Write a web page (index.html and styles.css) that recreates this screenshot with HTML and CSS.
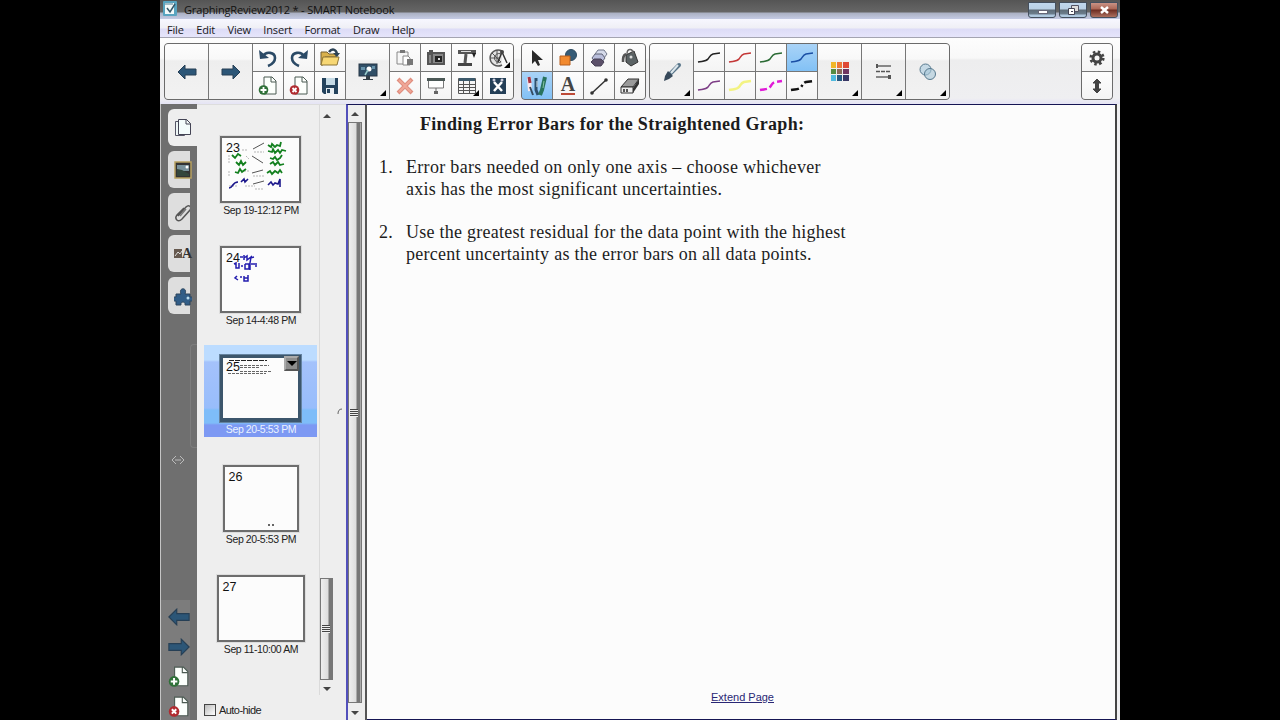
FILE: index.html
```html
<!DOCTYPE html>
<html lang="en">
<head>
    <meta charset="UTF-8">
    <title>GraphingReview2012 * - SMART Notebook</title>
    <link rel="stylesheet" href="styles.css">
</head>
<body>

    <!-- Shared icons -->
    <svg class="defs">
        <symbol id="arrow" viewBox="0 0 20 16"><path d="M1 8 8 1v4h11v6H8v4z" fill="#2c5677" stroke="#263f55" stroke-width="1"/></symbol>
        <symbol id="undo" viewBox="0 0 20 20"><path d="M5 8C8 3 17 4 17 10c0 4-2 6-7 8" fill="none" stroke="#2b4a66" stroke-width="2.600"/><path d="M1 2l1 9 9-1z" fill="#2b4a66"/></symbol>
        <symbol id="page-add" viewBox="0 0 20 20"><path d="M6 1h8l4 4v13H6z" fill="#fcfffc" stroke="#4b5a52"/><path d="M13 1v5h5" fill="none" stroke="#4b5a52"/><circle cx="5.5" cy="14" r="4.8" fill="#2f7038"/><path d="M5.500 11v6M2.500 14h6" stroke="#fff" stroke-width="1.800"/></symbol>
        <symbol id="page-del" viewBox="0 0 20 20"><path d="M6 1h8l4 4v13H6z" fill="#fcfffc" stroke="#4b5a52"/><path d="M13 1v5h5" fill="none" stroke="#4b5a52"/><circle cx="5.5" cy="14" r="4.8" fill="#b02b30"/><path d="M3.500 12l4 4M7.500 12l-4 4" stroke="#fff" stroke-width="1.800"/></symbol>
        <symbol id="curve" viewBox="0 0 24 14"><path d="M1 11C6 10 9 10.500 11 8S13 4 16 3L23 2" fill="none" stroke="currentColor"/></symbol>
    </svg>

    <div class="app">
        <div class="titlebar">
            <svg class="logo" width="16" height="17" viewBox="0 0 16 17"><rect x="1" y="1" width="14" height="15" rx="1" fill="#59a4c0"/><path d="M3 3h9v11H3z" fill="#f4fafa"/><path d="M5 8l3 4 5-8" fill="none" stroke="#34596b" stroke-width="1.500"/><path d="M4 3v2M6 3v2M8 3v2M10 3v2" stroke="#4c7c90"/></svg>
            <span class="title">GraphingReview2012 * - SMART Notebook</span>
            <div class="window-buttons">
                <div class="win"><svg width="28" height="15"><rect x="9.500" y="7.500" width="9" height="3" fill="#fff" stroke="#667"/></svg></div>
                <div class="win"><svg width="28" height="15"><path d="M11.500 2.500h7v6h-7z" fill="#ddd" stroke="#556"/><path d="M8.500 5.500h6v6h-6z" fill="#fff" stroke="#445"/><path d="M11 8h2v1h-2z" fill="#445"/></svg></div>
                <div class="win close"><svg width="28" height="15"><path d="M10 4l7 6M17 4l-7 6" stroke="#fff" stroke-width="2.500"/></svg></div>
            </div>
        </div>

        <div class="menubar">
            <span>File</span><span>Edit</span><span>View</span><span>Insert</span><span>Format</span><span>Draw</span><span>Help</span>
        </div>

        <div class="toolbar">
            <div class="group main-group">
                <div class="cell big"><svg width="20" height="16"><use href="#arrow"/></svg></div>
                <div class="cell big"><svg class="flip" width="20" height="16"><use href="#arrow"/></svg></div>
                <div class="cell"><svg width="20" height="20"><use href="#undo"/></svg></div>
                <div class="cell"><svg class="flip" width="20" height="20"><use href="#undo"/></svg></div>
                <div class="cell"><svg width="20" height="20" viewBox="0 0 20 20"><path d="M1 4h6l2 2h7v3H5l-2 8H1z" fill="#d9b14c" stroke="#756030"/><path d="M3 9h16l-2 8H1z" fill="#f7d774" stroke="#8d7434"/><path d="M9 4c3-4 7-3 8 2" fill="none" stroke="#2d4355" stroke-width="2.500"/><path d="M13 5h7l-3 4z" fill="#2d4355"/></svg></div>
                <div class="cell"><svg width="20" height="20"><use href="#page-add"/></svg></div>
                <div class="cell"><svg width="20" height="20"><use href="#page-del"/></svg></div>
                <div class="cell"><svg width="18" height="18" viewBox="0 0 18 18"><path d="M1 1h16v16H3l-2-2z" fill="#24435d"/><path d="M5 1h9v7H5z" fill="#c6dbe6"/><path d="M5 11h8v6H5z" fill="#e8eef2"/><path d="M6 12h3v4H6z" fill="#24435d"/></svg></div>
                <div class="cell big menu"><svg width="20" height="18" viewBox="0 0 20 18"><rect x="1" y="1" width="18" height="12" fill="#304f67" stroke="#263746"/><path d="M3 4h4v3H3zM14 3h3v3h-3z" fill="#6692aa"/><circle cx="11" cy="6" r="2.500" fill="#fff"/><path d="M7 12l3-5" stroke="#9cc" stroke-width="1.500"/><path d="M8 13h4v3h3v1H5v-1h3z" fill="#333f48"/></svg></div>
                <div class="cell"><svg width="20" height="20" viewBox="0 0 20 20"><path d="M2 4h11v12H2z" fill="#f7f7f7" stroke="#888"/><path d="M5 2h5v3H5z" fill="#777"/><path d="M8 8h5l2 2v7H8z" fill="#fff" stroke="#888"/><path d="M12 11h6v6h-6z" fill="#777"/></svg></div>
                <div class="cell"><svg width="20" height="20" viewBox="0 0 20 20"><path d="M1 4h18v13H1z" fill="#555"/><path d="M3 2h4v2H3z" fill="#555"/><path d="M3 7h2v8H3z" fill="#888"/><path d="M7 6h10v9H7z" fill="#888"/><path d="M9 8h7v6H9z" fill="#222"/><path d="M12 10h2v2h-2z" fill="#ddd"/></svg></div>
                <div class="cell"><svg width="20" height="20" viewBox="0 0 20 20"><path d="M1 2h18v4H1z" fill="#555"/><path d="M4 3h10v1H4z" fill="#ddd"/><path d="M15 5h4l-2 5z" fill="#222"/><path d="M9 6L8 15" stroke="#555" stroke-width="3"/><path d="M1 15h14v3H1z" fill="#444"/></svg></div>
                <div class="cell menu"><svg width="21" height="20" viewBox="0 0 21 20"><path d="M14 17A8 8 0 1 1 14 3" fill="#e4e4e4" stroke="#555" stroke-width="1.500"/><path d="M13 14a4.500 4.500 0 1 1 0-8M2 10h9M9 2v14M4 5l9 9" fill="none" stroke="#555"/><path d="M14 4l-4 10M14 4l5 11" stroke="#333" stroke-width="1.500"/><circle cx="14" cy="4" r="2" fill="#444"/></svg></div>
                <div class="cell"><svg width="18" height="18"><path d="M2 2l14 14M16 2L2 16" stroke="#df8d7e" stroke-width="4"/><path d="M3 3l12 12M15 3L3 15" stroke="#f0a797" stroke-width="2"/></svg></div>
                <div class="cell"><svg width="20" height="20" viewBox="0 0 20 20"><path d="M2.500 4v8h15V4" fill="#fff" stroke="#777"/><path d="M1 2h18v3H1z" fill="#4b5856"/><path d="M10 12v5" stroke="#666"/><path d="M8 15h4v3H8z" fill="#666"/></svg></div>
                <div class="cell menu"><svg width="18" height="18"><path d="M.5 1.500h17v15H.5z" fill="#f5f5f5" stroke="#555"/><path d="M1 1h16v3H1z" fill="#3c596b"/><path d="M0 7.500h17M0 10.500h17M0 13.500h17M5.500 4v12M11.500 4v12" stroke="#555"/></svg></div>
                <div class="cell"><svg width="18" height="18"><path d="M1 1h16v16H1z" fill="#243f57"/><path d="M5 5l8 9M13 5l-8 9" stroke="#fff" stroke-width="2.500"/><circle cx="5" cy="3" r="1.500" fill="#ccd"/><circle cx="13" cy="3" r="1.500" fill="#ccd"/></svg></div>
            </div>

            <div class="group tools-group">
                <div class="cell"><svg width="16" height="18"><path d="M3 1v14l3-3 3 5 2-1-2-5h5z" fill="#292929"/></svg></div>
                <div class="cell"><svg width="20" height="20"><circle cx="13" cy="7" r="5.500" fill="#365b76" stroke="#2d4b61"/><path d="M2 8h10v9H2z" fill="#f28a2f" stroke="#b65e1f"/></svg></div>
                <div class="cell"><svg width="20" height="20"><path d="M9 2h6l3 4-3 4H9L6 6z" fill="#d5daea" stroke="#717789"/><path d="M6 6h7l3 4-3 4H6l-3-4z" fill="#b9bedb" stroke="#616477"/><path d="M5 11h7l3 3-3 4H6l-4-4z" fill="#5b5069" stroke="#494257"/></svg></div>
                <div class="cell"><svg width="20" height="20"><path d="M6 7l8-4 4 11-7 4-5-4z" fill="#5a6264" stroke="#333"/><path d="M7 6c0-6 6-6 6 0" fill="none" stroke="#666" stroke-width="1.500"/><path d="M6 6C3 7 3 10 3 14" fill="none" stroke="#555" stroke-width="2.500"/><circle cx="11" cy="9" r="1.500" fill="#ddd"/></svg></div>
                <div class="cell active"><svg width="22" height="22"><path d="M3 2l1 14" stroke="#f7e8ed" stroke-width="4"/><path d="M3 2l1 6" stroke="#a73544" stroke-width="3"/><path d="M4 12l3 8" stroke="#334b60" stroke-width="2"/><path d="M10 3v12l2 5" fill="none" stroke="#2e506e" stroke-width="3"/><path d="M11 6v6" stroke="#d7e7f0"/><path d="M19 2l-3 13-2 5" fill="none" stroke="#28735d" stroke-width="4"/><path d="M18 6l-1 7" stroke="#84c3a0"/></svg></div>
                <div class="cell letter"><span>A</span></div>
                <div class="cell"><svg width="20" height="20"><path d="M3 17L17 4" stroke="#333" stroke-width="1.500"/><circle cx="3" cy="17" r="1.800" fill="#333"/><circle cx="17" cy="4" r="1.800" fill="#333"/></svg></div>
                <div class="cell"><svg width="22" height="20"><path d="M2 11L9 3h11l-6 8z" fill="#9a9a9a" stroke="#333"/><path d="M2 11h12v6H2z" fill="#eee" stroke="#333"/><path d="M14 12l6-9v5l-6 9z" fill="#333"/><path d="M4 13h2v3H4zM7 13h2v3H7z" fill="#555"/></svg></div>
            </div>

            <div class="group pens-group">
                <div class="cell big menu"><svg width="20" height="20"><path d="M8 12L17 3" stroke="#567387" stroke-width="4" stroke-linecap="round"/><path d="M9 11l7-8" stroke="#dbe6ec" stroke-width="2"/><path d="M6 9l5 5-4 3-5 2 1-5z" fill="#37495a"/></svg></div>
                <div class="cell"><svg class="pen black" width="24" height="14"><use href="#curve"/></svg></div>
                <div class="cell"><svg class="pen red" width="24" height="14"><use href="#curve"/></svg></div>
                <div class="cell"><svg class="pen green" width="24" height="14"><use href="#curve"/></svg></div>
                <div class="cell active"><svg class="pen blue" width="24" height="14"><use href="#curve"/></svg></div>
                <div class="cell"><svg class="pen purple" width="24" height="14"><use href="#curve"/></svg></div>
                <div class="cell"><svg class="pen yellow" width="24" height="14"><use href="#curve"/></svg></div>
                <div class="cell"><svg class="pen magenta" width="24" height="14"><use href="#curve"/></svg></div>
                <div class="cell"><svg class="pen dotted" width="24" height="14"><use href="#curve"/></svg></div>
                <div class="cell big menu"><svg width="18" height="19"><path d="M0 0h5v6H0z" fill="#f0b629"/><path d="M6 0h5v6H6z" fill="#ed7637"/><path d="M12 0h6v6h-6z" fill="#df4835"/><path d="M0 7h5v5H0z" fill="#548c43"/><path d="M6 7h5v5H6z" fill="#8b6a59"/><path d="M12 7h6v5h-6z" fill="#713660"/><path d="M0 13h5v6H0z" fill="#50bbdf"/><path d="M6 13h5v6H6z" fill="#285a82"/><path d="M12 13h6v6h-6z" fill="#393765"/></svg></div>
                <div class="cell big menu"><svg width="17" height="17"><path d="M1 3h15M1 14h15" stroke="#666" stroke-width="1.500"/><path d="M1 8.500h15" stroke="#555" stroke-width="1.500" stroke-dasharray="4 1"/><path d="M1 1h2v4H1zM13 12h3v4h-3z" fill="#555"/></svg></div>
                <div class="cell big menu"><svg width="18" height="18"><circle cx="6.500" cy="6.500" r="5.500" fill="#c5d9e5" stroke="#57798e"/><circle cx="11" cy="11" r="5.500" fill="#a9c8d9" fill-opacity=".6" stroke="#57798e"/></svg></div>
            </div>

            <div class="group settings-group">
                <div class="cell"><svg width="16" height="16"><circle cx="8" cy="8" r="4" fill="none" stroke="#444" stroke-width="3"/><circle cx="8" cy="8" r="6.300" fill="none" stroke="#444" stroke-width="2.600" stroke-dasharray="2.500 2.450"/></svg></div>
                <div class="cell"><svg width="12" height="16"><path d="M6 1l4 4H7.500v6H10l-4 4-4-4h2.500V5H2z" fill="#444" stroke="#444"/></svg></div>
            </div>
        </div>

        <div class="workspace">
            <div class="rail">
                <div class="tab active"><svg width="18" height="20"><path d="M1.500 3.500h9v14h-9z" fill="#eef6f6" stroke="#556"/><path d="M4.500 1.500h8l4 4v11h-12z" fill="#f4fcfc" stroke="#445"/><path d="M12 1v5h5" fill="none" stroke="#445"/></svg></div>
                <div class="tab"><svg width="18" height="18"><path d="M1 1h16v16H1z" fill="#333" stroke="#b8a160" stroke-width="1.500"/><path d="M3 4h12v6H3z" fill="#78919a"/><path d="M3 8l5 1 7 4v2H3z" fill="#34463c"/><circle cx="13" cy="6" r="1.500" fill="#fff"/></svg></div>
                <div class="tab"><svg width="16" height="20"><path d="M4 14l8-9c3-3 6 0 4 3l-8 9c-4 4-8 0-5-4l7-7" fill="none" stroke="#555" stroke-width="1.500"/><path d="M6 14l6-7" stroke="#777" stroke-width="1.500"/></svg></div>
                <div class="tab gallery"><svg width="8" height="12"><path d="M0 1h8v9H0z" fill="#65584e"/><path d="M1 8l3-4 2 2 2-3" stroke="#ddd" fill="none"/></svg><b>A</b></div>
                <div class="tab"><svg width="18" height="20"><path d="M2 8h5c-3-7 7-7 4 0h5v3c4-1 5 5 0 4v4h-5c1-4-5-4-4 0H2v-4c-4 1-4-5 0-4z" fill="#315d87" stroke="#2c455d"/><circle cx="14" cy="12" r="1.500" fill="#bde"/></svg></div>
                <div class="rail-grip"></div>
                <svg class="rail-resize" width="16" height="12"><path d="M6 2L2 6l4 4M10 2l4 4-4 4M5 6h6" fill="none" stroke="#bbb"/></svg>
                <div class="rail-actions">
                    <svg width="24" height="18"><use href="#arrow"/></svg>
                    <svg class="flip" width="24" height="18"><use href="#arrow"/></svg>
                    <svg width="22" height="22"><use href="#page-add"/></svg>
                    <svg width="22" height="22"><use href="#page-del"/></svg>
                </div>
            </div>

            <div class="sorter">
                <div class="pages">
                    <div class="page">
                        <div class="thumb"><span>23</span>
                            <svg width="76" height="62" viewBox="0 0 76 62" fill="none">
                                <g stroke="#b5b5b5"><path d="M7 17v9M7 33v6M20 12h6M7 48h8M24 18l3 3M22 33h6M23 48h10M32 14h10M31 38h11M33 51h8" stroke-dasharray="2 1"/></g>
                                <path d="M31 11l11-6M30 18l11 7M30 35l11-3M31 46l11-3" stroke="#555"/>
                                <g stroke="#13801f" stroke-width="1.800"><path d="M46 7l3 2 1-3 3 3 2-2 3 1 1-4M46 13l4 1 1-3 2 4 3-3 2 3 2-3 4 1M48 20l3 1 2-2 2 3 3-2 2-3M48 26l3-2 2 3 3-3 2 3 4-1M45 35l3-2 2 3 3-3 3 2 2-3 2 3M10 17l3 3 3-4 3 2M14 24l3 3 2-4 2 4 3-3M13 34l3 1 2-4 2 3 4-3"/></g>
                                <g stroke="#1c188c" stroke-width="1.600"><path d="M7 50c4 0 3-6 9-6M19 44l3-3 1 3 3-3M46 47l3-3 2 3 2-2 3 1 2-5v8"/></g>
                            </svg>
                        </div>
                        <p>Sep 19-12:12 PM</p>
                    </div>
                    <div class="page">
                        <div class="thumb"><span>24</span>
                            <svg width="76" height="62" viewBox="0 0 76 62" fill="none" stroke="#231dae" stroke-width="1.500"><path d="M18 9h3M22 7v5M22 10l3-2v4l4-3-1 6M28 10l4-1M12 16l2-1v5h3v-5M19 18h2M23 16v5h4v-5h-4M28 15v7M29 16h4M34 15v4M15 28l-2 2 3 2M18 29h2M22 28v5h4v-6M22 30h4"/></svg>
                        </div>
                        <p>Sep 14-4:48 PM</p>
                    </div>
                    <div class="page selected">
                        <div class="thumb"><span>25</span>
                            <svg width="76" height="62"><path d="M6 2.500h38" stroke="#222" stroke-dasharray="5 1"/><path d="M17 7.500h29M17 9.500h20M17 13.500h31M5 15.500h38" stroke="#666" stroke-dasharray="3 1"/></svg>
                            <div class="thumb-menu"></div>
                        </div>
                        <p>Sep 20-5:53 PM</p>
                    </div>
                    <div class="page">
                        <div class="thumb narrow"><span>26</span>
                            <svg width="72" height="62"><path d="M43 58h2M47 58h2" stroke="#333" stroke-width="1.500"/></svg>
                        </div>
                        <p>Sep 20-5:53 PM</p>
                    </div>
                    <div class="page">
                        <div class="thumb wide"><span>27</span></div>
                        <p>Sep 11-10:00 AM</p>
                    </div>
                    <div class="autohide"><i></i>Auto-hide</div>
                </div>
                <div class="scroll side-scroll">
                    <i class="up"></i>
                    <div class="track"><div class="handle"><i class="lines"></i></div></div>
                    <i class="down"></i>
                </div>
                <svg class="pull" width="6" height="8"><path d="M5 1C2 1 1 3 1 6" fill="none" stroke="#666"/></svg>
            </div>

            <div class="scroll canvas-scroll">
                <i class="up"></i>
                <div class="handle"><i class="lines"></i></div>
                <i class="down"></i>
            </div>

            <div class="canvas">
                <h1>Finding Error Bars for the Straightened Graph:</h1>
                <ol>
                    <li><span class="num">1.</span><div><span class="wider">Error bars needed on only one axis – choose whichever</span><br><span>axis has the most significant uncertainties.</span></div></li>
                    <li><span class="num">2.</span><div><span>Use the greatest residual for the data point with the highest</span><br><span>percent uncertainty as the error bars on all data points.</span></div></li>
                </ol>
                <a class="extend" href="#">Extend Page</a>
            </div>
        </div>
    </div>

</body>
</html>
```
FILE: styles.css
```css
* {
    box-sizing: border-box;
}

body {
    margin: 0;
    background: #000;
    font-family: "Open Sans", "Noto Sans", sans-serif;
    overflow: hidden;
}

.defs {
    display: none;
}

svg {
    display: block;
    flex: none;
}

.flip {
    transform: scaleX(-1);
}

.app {
    width: 960px;
    height: 720px;
    margin: 0 auto;
    display: flex;
    flex-direction: column;
    background: #efeff1;
}

/* Title and menu */
.titlebar {
    height: 19px;
    display: flex;
    padding-left: 2px;
    background: linear-gradient(#555 0, #666 12px, #aab0c2 13px, #c5cbe4 19px);
}

.title {
    margin-left: 6px;
    font-size: 11px;
    line-height: 19px;
    letter-spacing: -0.160px;
    color: #111;
}

.window-buttons {
    display: flex;
    gap: 3px;
    margin: 2px 2px 0 auto;
}

.win {
    width: 28px;
    height: 16px;
    border: 1px solid #444f5e;
    border-radius: 0 0 3px 3px;
    background: linear-gradient(#c1d7ed 0, #bad0e5 6px, #5e6c78 7px, #6c7d8c 11px, #afc8df 12px);
}

.win.close {
    background: linear-gradient(#c99285, #ac6756 6px, #6d2d22 7px, #ad705f);
}

.menubar {
    height: 19px;
    display: flex;
    gap: 12.500px;
    padding-left: 7px;
    font-size: 11px;
    line-height: 21px;
    letter-spacing: -0.180px;
    color: #181818;
    background: linear-gradient(#f7f7ff 0, #efeff5 9px, #dddcf7 10px, #e6e5fb);
    border-bottom: 1px solid #a4a4b1;
}

/* Toolbar */
.toolbar {
    height: 66px;
    display: flex;
    padding: 5px 7px 0 4px;
    background: linear-gradient(#fdfdfd 0, #f8f8f8 20px, #ededee 22px, #efeff1 60px, #e5e4f5);
}

.group {
    height: 57px;
    display: grid;
    grid-template-rows: 27px 27px;
    gap: 1px;
    border: 1px solid #6b6b6b;
    border-radius: 4px;
    overflow: hidden;
    background: #777;
}

.main-group {
    width: 350px;
    grid-template-columns: 43px 43px 30px 30px 30px 43px 30px 30px 30px 30px;
    margin-right: 7px;
}

.tools-group {
    width: 125px;
    grid-template-columns: repeat(4, 30px);
    margin-right: 3px;
}

.pens-group {
    width: 301px;
    grid-template-columns: 43px 30px 30px 30px 30px 43px 43px 43px;
}

.settings-group {
    width: 32px;
    margin-left: auto;
    grid-template-columns: 30px;
}

.cell {
    position: relative;
    display: flex;
    align-items: center;
    justify-content: center;
    background: linear-gradient(#fdfdfd 0, #f4f4f4);
}

.cell.big {
    grid-row: 1 / 3;
    background: linear-gradient(#fdfdfd 0, #f8f8f8 15px, #eee 17px, #f2f2f2);
}

/* the two-row cells sit between their full-height neighbours */
.main-group .cell:nth-child(1) { grid-column: 1; }
.main-group .cell:nth-child(2) { grid-column: 2; }
.main-group .cell:nth-child(9) { grid-column: 6; }
.main-group .cell:nth-child(6),
.main-group .cell:nth-child(7),
.main-group .cell:nth-child(8),
.main-group .cell:nth-child(n+14) { grid-row: 2; }
.main-group .cell:nth-child(3) { grid-area: 1 / 3; }
.main-group .cell:nth-child(4) { grid-area: 1 / 4; }
.main-group .cell:nth-child(5) { grid-area: 1 / 5; }
.main-group .cell:nth-child(6) { grid-column: 3; }
.main-group .cell:nth-child(7) { grid-column: 4; }
.main-group .cell:nth-child(8) { grid-column: 5; }
.main-group .cell:nth-child(10) { grid-area: 1 / 7; }
.main-group .cell:nth-child(11) { grid-area: 1 / 8; }
.main-group .cell:nth-child(12) { grid-area: 1 / 9; }
.main-group .cell:nth-child(13) { grid-area: 1 / 10; }
.pens-group .cell:nth-child(1) { grid-column: 1; }
.pens-group .cell:nth-child(10) { grid-column: 6; }
.pens-group .cell:nth-child(11) { grid-column: 7; }
.pens-group .cell:nth-child(12) { grid-column: 8; }

.cell.active {
    background: linear-gradient(#a9d3f7, #82c1f5);
}

.cell.menu::after {
    content: "";
    position: absolute;
    right: 3px;
    bottom: 3px;
    border-left: 6px solid transparent;
    border-bottom: 6px solid #000;
}

.letter span {
    font: bold 20px/17px "Liberation Serif", serif;
    color: #444;
    border-bottom: 2px solid #bd4a37;
}

.pen { stroke-width: 1.500; }
.pen.black { color: #222; }
.pen.red { color: #c43838; }
.pen.green { color: #2b6b35; }
.pen.blue { color: #1b4fa5; }
.pen.purple { color: #7d3d86; }
.pen.yellow { color: #f3f382; stroke-width: 2.500; }
.pen.magenta { color: #e01ad7; stroke-width: 2.500; stroke-dasharray: 7 3; }
.pen.dotted { color: #111; stroke-width: 2.500; stroke-dasharray: 8 3 2 3; }

/* Left rail */
.workspace {
    height: 616px;
    display: flex;
}

.rail {
    width: 37px;
    display: flex;
    flex-direction: column;
    align-items: flex-end;
    background: #6f6f6f;
    border-left: 1px solid #c5c5c5;
    padding-top: 5px;
    overflow: hidden;
}

.tab {
    width: 29px;
    height: 37px;
    flex: none;
    margin-bottom: 5px;
    display: flex;
    align-items: center;
    padding-left: 6px;
    border-radius: 6px 0 0 6px;
    background: linear-gradient(90deg, #dedede 22px, #6f6f6f 22px);
}

.tab.active {
    background: #eee;
}

.gallery {
    font: bold 14px "Liberation Serif", serif;
    color: #333;
}

.rail-grip {
    width: 7px;
    height: 104px;
    flex: none;
    margin-top: 25px;
    border: 1px solid #7d7d7d;
    border-right: 0;
    border-radius: 4px 0 0 4px;
}

.rail-resize {
    margin: 6px 11px 0 0;
}

.rail-actions {
    width: 36px;
    height: 120px;
    margin-top: auto;
    padding: 8px 0 0 6px;
    flex: none;
    display: flex;
    flex-direction: column;
    gap: 12px;
    background: linear-gradient(90deg, #7c7c7c 29px, #6f6f6f 29px);
}

.rail-actions svg:nth-child(n+3) {
    margin: -2px 0 -2px 1px;
}

/* Page sorter */
.sorter {
    width: 149px;
    display: flex;
    background: #eee;
    border-top: 1px solid #ddd;
}

.pages {
    width: 122px;
    padding: 21px 2px 0 7px;
}

.page {
    height: 92px;
    margin-bottom: 17.700px;
    padding-top: 10px;
    display: flex;
    flex-direction: column;
    align-items: center;
}

.page.selected {
    background: linear-gradient(#bcdcff 0, #bcdcff 15px, #a4c2fb 17px, #98bdfb 63px, #7ebdf9 65px, #7ebdf9 78px, #7d99f3 80px);
}

.thumb {
    position: relative;
    width: 81px;
    height: 67px;
    flex: none;
    border: 2px solid #6d6d6d;
    background: #fcfcfc;
    box-shadow: 0 0 0 1px #ddd;
}

.thumb.narrow {
    width: 76px;
}

.thumb.wide {
    width: 88px;
}

.selected .thumb {
    border: 3px solid #3c566c;
    border-bottom-width: 4px;
    box-shadow: 0 0 0 1px #6583a0;
}

.thumb span {
    position: absolute;
    left: 4px;
    top: 3px;
    font: 12.500px/14px "Liberation Sans", Arial, sans-serif;
    color: #111;
}

.selected .thumb span {
    left: 3px;
    top: 2px;
}

.thumb svg {
    position: absolute;
    left: 0;
    top: 0;
}

.thumb-menu {
    position: absolute;
    top: -2px;
    right: -1px;
    width: 15px;
    height: 15px;
    background: #8d8d8d;
    border: 2px outset #aaa;
}

.thumb-menu::after {
    content: "";
    position: absolute;
    left: 1px;
    top: 3px;
    border: 5px solid transparent;
    border-top-color: #000;
    border-bottom: 0;
}

.page p {
    margin: 1px 0 0 1px;
    font: 10.500px/13px "Liberation Sans", Arial, sans-serif;
    letter-spacing: -0.400px;
    white-space: nowrap;
    color: #222;
}

.page.selected p {
    color: #eaf3ff;
}

.autohide {
    display: flex;
    align-items: center;
    gap: 3px;
    margin-top: 46px;
    font: 11px/14px "Liberation Sans", Arial, sans-serif;
    letter-spacing: -0.600px;
    color: #222;
}

.autohide {
    letter-spacing: -0.550px;
}

.autohide i {
    width: 12px;
    height: 12px;
    border: 1px solid #444;
    background: linear-gradient(135deg, #bbb, #fff);
}

/* Scrollbars */
.scroll {
    display: flex;
    flex-direction: column;
    align-items: center;
}

.up,
.down {
    flex: none;
    border: 4px solid transparent;
}

.up {
    border-top: 0;
    border-bottom-color: #444;
}

.down {
    border-bottom: 0;
    border-top-color: #444;
}

.side-scroll {
    width: 14px;
    height: 590px;
    padding: 9px 0 4px;
    border-left: 1px solid #dadada;
}

.track {
    flex: 1;
    display: flex;
    align-items: flex-end;
    padding-bottom: 7px;
}

.handle {
    width: 13px;
    height: 102px;
    display: flex;
    align-items: center;
    justify-content: center;
    border: 1px solid #777;
    background: linear-gradient(90deg, #eee 0, #ddd 7px, #777 8px, #777 11px, #ddd 12px);
}

.lines {
    width: 8px;
    height: 8px;
    margin-right: 2px;
    background: repeating-linear-gradient(#444 0, #444 1px, #eee 1px, #eee 2px);
}

.pull {
    margin: 303px 0 0 4px;
}

.canvas-scroll {
    width: 21px;
    padding: 7px 3px 5px 0;
    border-left: 2px solid #5250bb;
    border-right: 2px solid #555;
    border-top: 1px solid #151553;
    background: #eee;
}

.canvas-scroll .handle {
    width: 14px;
    height: auto;
    flex: 1;
    margin: 6px 0 8px;
}

/* Canvas */
.canvas {
    position: relative;
    width: 750px;
    border-top: 1px solid #151553;
    border-right: 2px solid #444;
    border-bottom: 1px solid #151553;
    background: #fcfcfc;
    font-family: "Liberation Serif", "Times New Roman", serif;
    color: #1c1c1c;
    overflow: hidden;
}

.canvas h1 {
    margin: 8px 0 0 53px;
    font-size: 18px;
    line-height: 22px;
    letter-spacing: 0.310px;
    white-space: nowrap;
}

.canvas ol {
    list-style: none;
    margin: 22px 0 0;
    padding: 0 0 0 12px;
    font-size: 18px;
    line-height: 21.700px;
    letter-spacing: 0.260px;
}

.canvas li {
    display: flex;
    white-space: nowrap;
    margin-bottom: 21.500px;
}

.canvas .wider {
    letter-spacing: 0.310px;
}

.num {
    width: 27px;
}

.extend {
    position: absolute;
    left: 344px;
    bottom: 15px;
    font: 11px/13px "Liberation Sans", Arial, sans-serif;
    color: #292775;
}
```
